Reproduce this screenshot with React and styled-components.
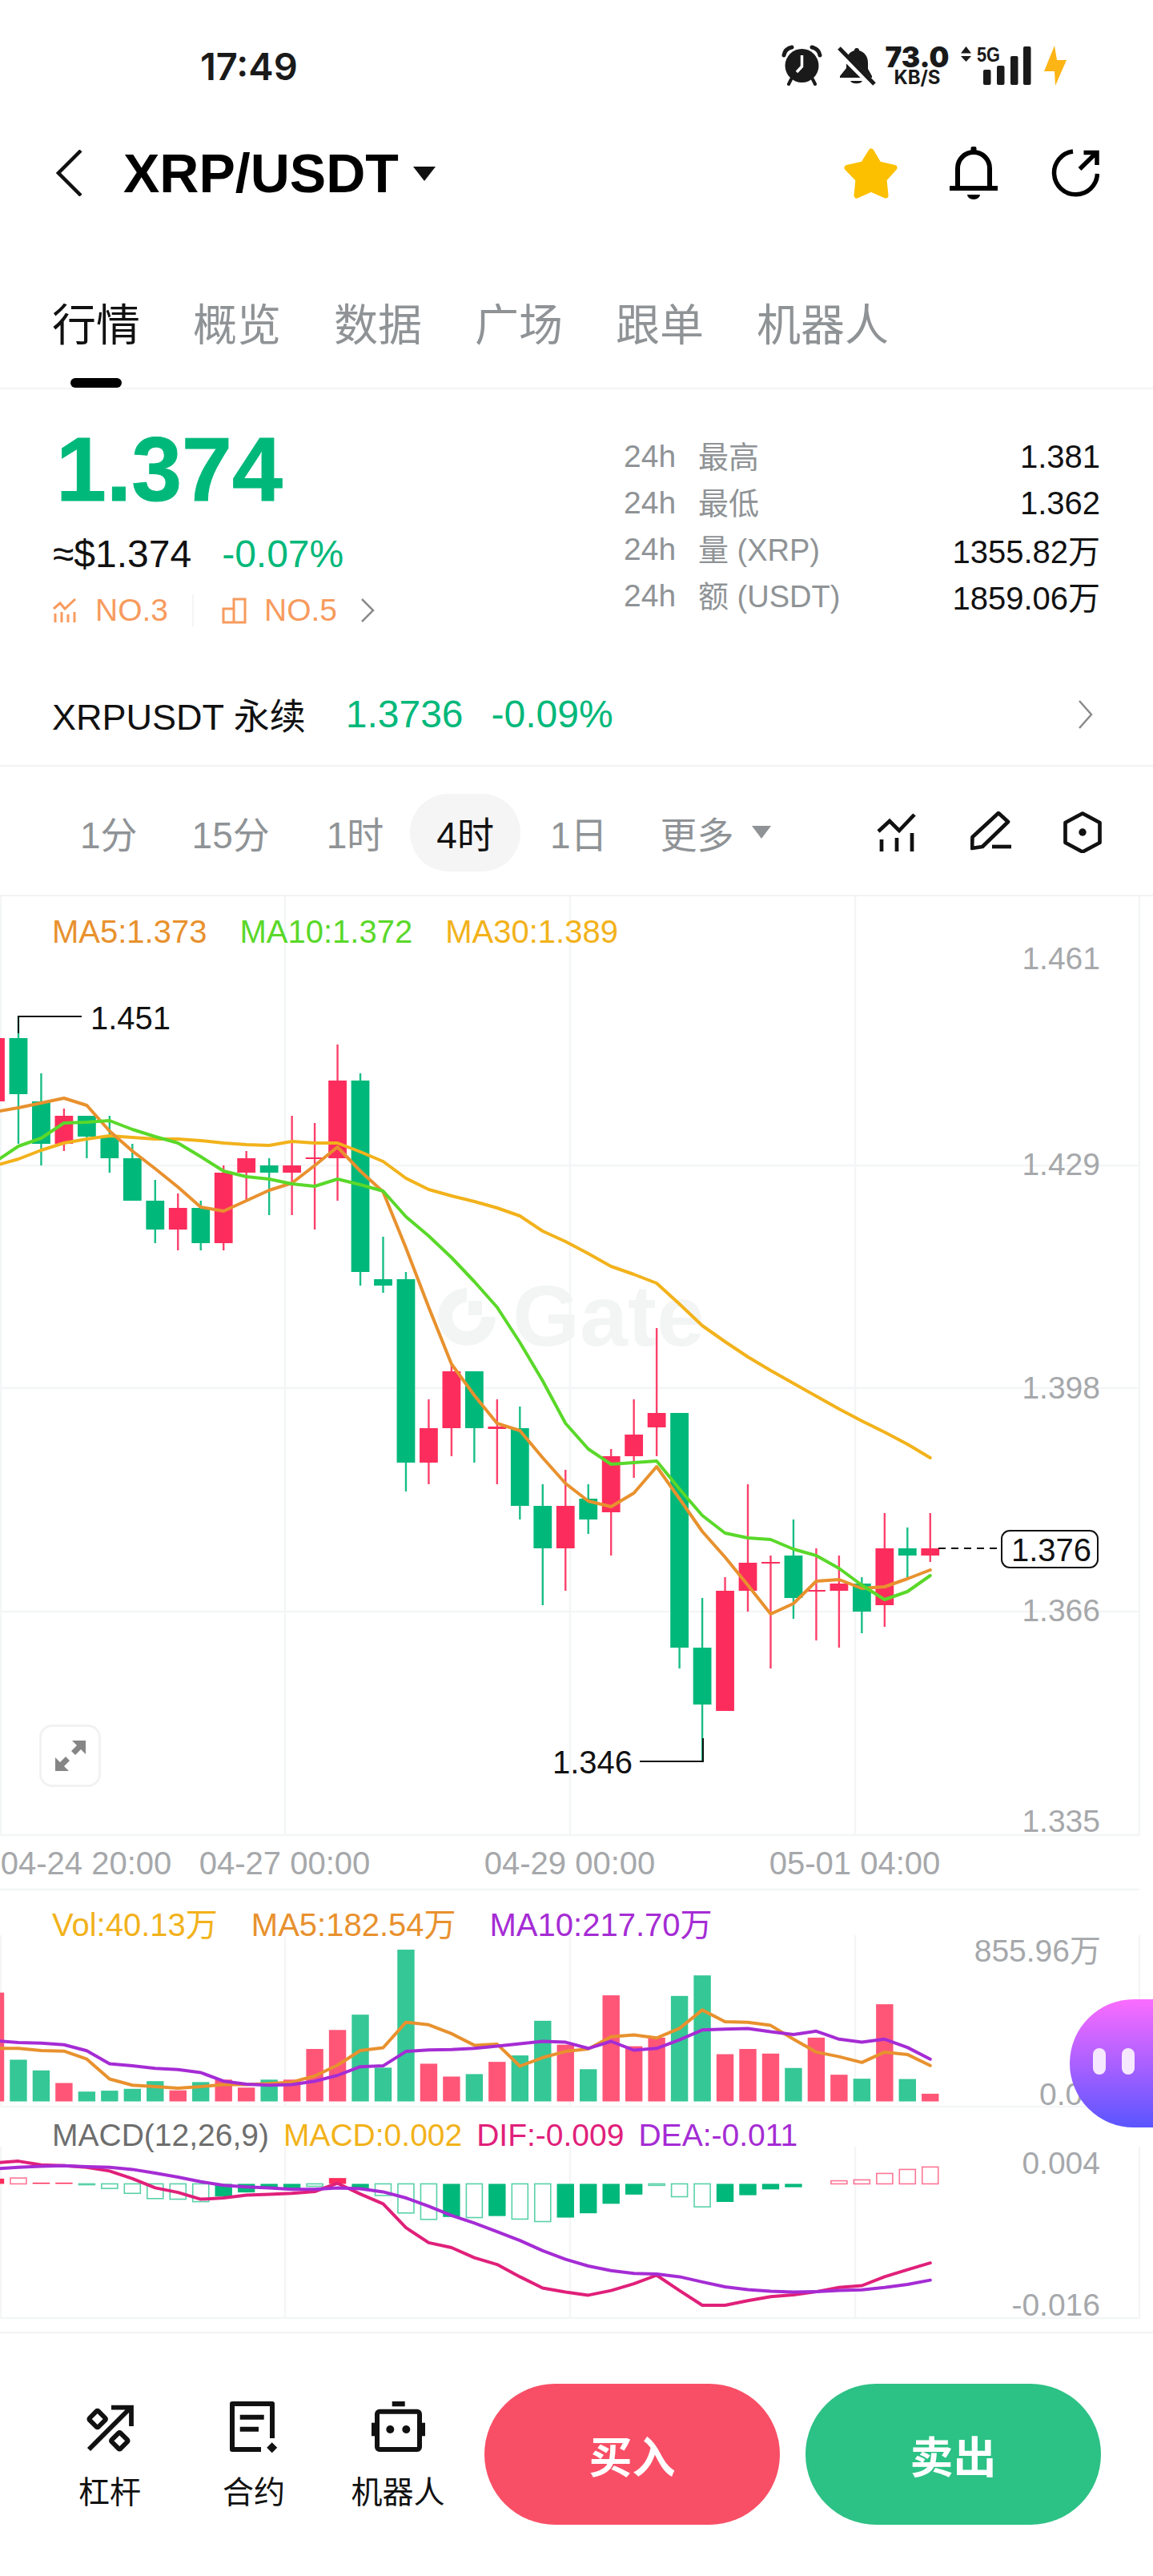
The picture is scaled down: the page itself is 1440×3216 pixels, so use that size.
import styled, { createGlobalStyle } from "styled-components";

const GlobalStyle = createGlobalStyle`
  html, body {
    margin: 0;
    padding: 0;
    background: #fff;
    font-family: "Liberation Sans", "Noto Sans CJK SC", sans-serif;
    color: #111;
  }
`;

const GREEN = "#00b87a";
const RED = "#fc2d5c";
const ORANGE = "#e8912e";
const LIME = "#5ad82a";
const YELLOW = "#f2b21b";
const PURPLE = "#a52cd4";
const PINK = "#e0207a";
const GRID = "#f4f5f6";
const GREY = "#8f9396";
const AXIS = "#a6a8ab";
const INK = "#1a1a1a";

// x of the candle with index i, on all three panels
const cx = (i) => -5.5 + 28.47 * i;
// sub panels were measured from a crop, this maps them back to page y
const py = (v) => 2320 + v / 2.613;
const toPoints = (ys) => ys.map((y, i) => `${cx(i).toFixed(1)},${y.toFixed(1)}`).join(" ");

// [colour, high, body top, body bottom, low]
const candles = [
  ["r", 1270, 1296, 1375, 1400], ["g", 1269, 1296, 1366, 1428], ["g", 1340, 1375, 1428, 1455], ["r", 1384, 1393, 1428, 1437],
  ["g", 1393, 1393, 1419, 1446], ["g", 1393, 1419, 1446, 1464], ["g", 1428, 1446, 1499, 1499], ["g", 1473, 1499, 1535, 1552],
  ["r", 1490, 1508, 1535, 1561], ["g", 1499, 1508, 1552, 1561], ["r", 1455, 1464, 1552, 1561], ["r", 1437, 1446, 1464, 1499],
  ["g", 1446, 1455, 1464, 1517], ["r", 1393, 1455, 1464, 1517], ["r", 1402, 1445, 1447, 1535], ["r", 1304, 1349, 1446, 1499],
  ["g", 1340, 1349, 1588, 1605], ["g", 1544, 1597, 1605, 1614], ["g", 1588, 1597, 1826, 1862], ["r", 1747, 1783, 1826, 1853],
  ["r", 1703, 1712, 1783, 1818], ["g", 1712, 1712, 1783, 1826], ["r", 1747, 1781, 1784, 1853], ["g", 1756, 1783, 1880, 1897],
  ["g", 1853, 1880, 1933, 2004], ["r", 1835, 1880, 1933, 1986], ["g", 1853, 1871, 1897, 1915], ["r", 1809, 1818, 1888, 1942],
  ["r", 1747, 1791, 1818, 1845], ["r", 1658, 1764, 1782, 1818], ["g", 1764, 1764, 2057, 2083], ["g", 1995, 2057, 2128, 2199],
  ["r", 1969, 1986, 2136, 2136], ["r", 1853, 1951, 1986, 2012], ["r", 1942, 1950, 1952, 2083], ["g", 1897, 1942, 1995, 2021],
  ["r", 1933, 1985, 1987, 2048], ["r", 1942, 1977, 1986, 2057], ["g", 1969, 1977, 2012, 2039], ["r", 1889, 1933, 2004, 2031],
  ["g", 1907, 1933, 1942, 1969], ["r", 1889, 1933, 1942, 1950],
];

const ma5 = [1388, 1383, 1377, 1371, 1380, 1412, 1437, 1459, 1482, 1507, 1512, 1499, 1486, 1477, 1455, 1432, 1462, 1488, 1558, 1632, 1703, 1742, 1777, 1786, 1820, 1852, 1874, 1881, 1864, 1831, 1871, 1912, 1944, 1979, 2015, 2002, 1974, 1972, 1983, 1981, 1971, 1960];
const ma10 = [1450, 1431, 1421, 1402, 1401, 1399, 1410, 1419, 1427, 1444, 1462, 1469, 1472, 1478, 1481, 1472, 1479, 1487, 1519, 1543, 1570, 1600, 1632, 1676, 1724, 1777, 1809, 1828, 1826, 1824, 1859, 1892, 1914, 1920, 1922, 1934, 1942, 1958, 1979, 1997, 1987, 1967];
const ma30 = [1455, 1447, 1436, 1427, 1422, 1418, 1420, 1422, 1422, 1424, 1427, 1429, 1430, 1425, 1427, 1427, 1438, 1450, 1471, 1485, 1493, 1500, 1508, 1518, 1537, 1550, 1565, 1581, 1591, 1602, 1628, 1655, 1675, 1694, 1711, 1727, 1743, 1759, 1774, 1788, 1803, 1820];

const volTops = [438, 657, 692, 733, 761, 758, 752, 727, 757, 730, 722, 748, 722, 722, 622, 560, 510, 683, 298, 670, 712, 704, 664, 643, 530, 608, 688, 447, 613, 585, 449, 382, 639, 622, 637, 684, 585, 706, 719, 476, 720, 768];
const volMa5 = [620, 620, 627, 629, 655, 720, 740, 745, 750, 745, 738, 738, 735, 730, 710, 675, 627, 618, 535, 543, 572, 610, 606, 678, 650, 630, 622, 582, 576, 586, 555, 495, 533, 535, 545, 590, 632, 647, 666, 632, 640, 676];
const volMa10 = [595, 601, 603, 608, 628, 670, 677, 685, 689, 699, 727, 737, 740, 738, 727, 708, 680, 677, 630, 625, 624, 620, 613, 605, 597, 600, 620, 597, 626, 620, 592, 560, 557, 555, 566, 575, 564, 590, 600, 590, 617, 655];

// [kind, edge] kind: s solid, h hollow. edge is the far end from the zero line
const macdBars = [
  ["s", 1045], ["h", 1043], ["s", 1058], ["s", 1058], ["h", 1065], ["h", 1077], ["h", 1093], ["h", 1110], ["h", 1112], ["h", 1120],
  ["s", 1103], ["s", 1090], ["s", 1078], ["s", 1078], ["h", 1070], ["s", 1043], ["s", 1078], ["h", 1100], ["h", 1157], ["h", 1178],
  ["s", 1170], ["h", 1172], ["s", 1167], ["h", 1177], ["h", 1185], ["s", 1172], ["s", 1158], ["s", 1127], ["s", 1097], ["h", 1067],
  ["h", 1104], ["h", 1137], ["s", 1121], ["s", 1099], ["s", 1080], ["s", 1073], null, ["h", 1052], ["h", 1049], ["h", 1028], ["h", 1015], ["h", 1007],
];
const dif = [993, 988, 1000, 1003, 1008, 1020, 1045, 1075, 1090, 1112, 1108, 1099, 1096, 1093, 1087, 1060, 1095, 1127, 1205, 1254, 1270, 1303, 1325, 1365, 1402, 1415, 1425, 1410, 1388, 1360, 1410, 1458, 1458, 1443, 1430, 1424, 1414, 1400, 1394, 1365, 1342, 1320];
const dea = [1013, 1008, 1005, 1003, 1006, 1008, 1015, 1027, 1040, 1055, 1067, 1072, 1075, 1080, 1080, 1075, 1078, 1088, 1108, 1135, 1165, 1190, 1218, 1247, 1280, 1308, 1330, 1345, 1354, 1356, 1365, 1382, 1398, 1407, 1412, 1415, 1414, 1410, 1408, 1400, 1390, 1376];

const gridX = [1, 356, 712, 1068, 1423];

const Page = styled.div`
  position: relative;
  width: 1440px;
  height: 3216px;
  overflow: hidden;
  background: #fff;
  display: flex;
  flex-direction: column;
`;

/* status bar */
const StatusBar = styled.div`
  height: 164px;
  flex: none;
  box-sizing: border-box;
  padding: 0 108px 0 250px;
  display: flex;
  align-items: center;
  justify-content: space-between;
`;
const Clock = styled.span`
  font-family: Inter, "Liberation Sans", sans-serif;
  font-size: 47px;
  font-weight: 600;
  color: ${INK};
`;
const StatusIcons = styled.div`
  display: flex;
  align-items: center;
  color: ${INK};
`;
const Speed = styled.div`
  width: 75px;
  margin: 0 17px 0 15px;
  display: flex;
  flex-direction: column;
  align-items: center;
  font-family: Inter, "Liberation Sans", sans-serif;
  font-weight: 700;
  & > b {
    font-size: 35px;
    line-height: 29px;
  }
  & > small {
    font-size: 24px;
    line-height: 21px;
    font-weight: 700;
  }
`;
const StatusSvg = styled.svg`
  flex: none;
  display: block;
  overflow: visible;
  margin-left: ${({ $ml }) => $ml || 0}px;
`;
const SmallNet = styled.text`
  font-size: 26px;
  font-weight: 700;
  fill: ${INK};
`;

/* nav */
const NavBar = styled.div`
  height: 104px;
  flex: none;
  box-sizing: border-box;
  padding: 0 67px 0 70px;
  display: flex;
  align-items: center;
`;
const Title = styled.h1`
  margin: 0 0 0 51px;
  font-size: 68px;
  line-height: 80px;
  font-weight: 700;
  color: #000;
`;
const TitleCaret = styled.i`
  width: 0;
  height: 0;
  margin: 2px 0 0 18px;
  border-left: 14px solid transparent;
  border-right: 14px solid transparent;
  border-top: 18px solid #111;
`;
const NavActions = styled.div`
  margin-left: auto;
  display: flex;
  align-items: center;
  gap: 64px;
`;

/* tabs */
const Tabs = styled.div`
  height: 218px;
  flex: none;
  box-sizing: border-box;
  padding: 110px 0 0 65px;
  display: flex;
  gap: 66px;
  align-items: flex-start;
  border-bottom: 2px solid #f3f3f3;
`;
const Tab = styled.span`
  position: relative;
  font-size: 55px;
  line-height: 56px;
  color: ${({ $active }) => ($active ? "#111" : GREY)};
  &::after {
    content: "";
    display: ${({ $active }) => ($active ? "block" : "none")};
    position: absolute;
    left: 23px;
    top: 94px;
    width: 64px;
    height: 12px;
    border-radius: 6px;
    background: #000;
  }
`;

/* quote */
const Quote = styled.div`
  height: 342px;
  flex: none;
  box-sizing: border-box;
  padding: 0 66px;
  display: flex;
  justify-content: space-between;
`;
const QuoteLeft = styled.div`
  padding-top: 52px;
  display: flex;
  flex-direction: column;
`;
const BigPrice = styled.div`
  margin-left: 4px;
  font-size: 113px;
  line-height: 96px;
  font-weight: 700;
  color: ${GREEN};
  -webkit-text-stroke: 1px ${GREEN};
`;
const UsdRow = styled.div`
  margin-top: 33px;
  display: flex;
  gap: 38px;
  font-size: 48px;
  line-height: 50px;
`;
const Change = styled.span`
  color: ${GREEN};
`;
const RankRow = styled.div`
  margin-top: 25px;
  height: 40px;
  display: flex;
  align-items: center;
  color: #f79b5e;
  font-size: 39px;
`;
const RankText = styled.span`
  margin-left: ${({ $ml }) => $ml}px;
`;
const RankDivider = styled.i`
  width: 2px;
  height: 40px;
  margin: 0 35px 0 30px;
  background: #f5f5f5;
`;
const Chevron = styled.svg`
  flex: none;
  display: block;
  margin-left: ${({ $ml }) => ($ml ? `${$ml}px` : "auto")};
`;
const Stats = styled.div`
  width: 595px;
  padding-top: 55px;
  display: flex;
  flex-direction: column;
`;
const StatRow = styled.div`
  height: 58px;
  display: flex;
  align-items: center;
  font-size: 39px;
`;
const StatPeriod = styled.span`
  width: 93px;
  color: ${GREY};
`;
const StatName = styled.span`
  margin-top: -5px;
  color: ${GREY};
  font-size: 38px;
`;
const StatValue = styled.span`
  margin-left: auto;
  font-size: 40px;
  color: #111;
`;

/* perp row */
const PerpRow = styled.div`
  height: 129px;
  flex: none;
  box-sizing: border-box;
  padding: 0 75px 0 65px;
  display: flex;
  align-items: center;
  border-bottom: 2px solid #f3f3f3;
`;
const PerpName = styled.span`
  font-size: 45px;
  margin-right: 50px;
`;
const PerpNumber = styled.span`
  font-size: 48px;
  color: ${GREEN};
  margin-right: 35px;
`;

/* period row */
const PeriodRow = styled.div`
  height: 162px;
  flex: none;
  box-sizing: border-box;
  padding: 4px 64px 0 66px;
  display: flex;
  align-items: center;
  border-bottom: 2px solid #f3f3f3;
`;
const Period = styled.span`
  box-sizing: border-box;
  height: 97px;
  padding: 0 ${({ $active }) => ($active ? 33 : 0)}px;
  margin-left: ${({ $ml }) => $ml}px;
  display: flex;
  align-items: center;
  justify-content: center;
  font-size: 46px;
  border-radius: 48px;
  color: ${({ $active }) => ($active ? "#111" : GREY)};
  background: ${({ $active }) => ($active ? "#f5f5f5" : "transparent")};
`;
const MoreCaret = styled.i`
  width: 0;
  height: 0;
  margin: 0 0 0 22px;
  border-left: 12px solid transparent;
  border-right: 12px solid transparent;
  border-top: 16px solid ${GREY};
`;
const PeriodTools = styled.div`
  margin-left: auto;
  display: flex;
  align-items: center;
  gap: 63px;
  & > svg:first-child {
    margin-right: 4px;
  }
`;

/* chart panels */
const ChartPanel = styled.div`
  position: relative;
  flex: none;
  box-sizing: border-box;
  height: ${({ $height }) => $height}px;
  padding: ${({ $top }) => $top}px 0 0 65px;
`;
const ChartSvg = styled.svg`
  position: absolute;
  left: 0;
  top: 0;
  display: block;
  overflow: visible;
`;
const Legend = styled.div`
  position: relative;
  display: flex;
  gap: ${({ $gap }) => $gap}px;
  font-size: ${({ $size }) => $size || 40}px;
  line-height: 42px;
  white-space: nowrap;
`;
const LegendItem = styled.span`
  color: ${({ $color }) => $color};
`;
const AxisText = styled.text`
  font-size: 39px;
  fill: ${AXIS};
  text-anchor: end;
  dominant-baseline: central;
`;
const MarkText = styled.text`
  font-size: 40px;
  fill: #111;
  dominant-baseline: central;
`;
const Watermark = styled.text`
  font-size: 108px;
  font-weight: 700;
  fill: #f3f5f5;
`;
const ExpandButton = styled.div`
  position: absolute;
  left: 49px;
  top: 1034px;
  width: 77px;
  height: 78px;
  box-sizing: border-box;
  border: 3px solid #f2f2f2;
  border-radius: 16px;
  display: flex;
  align-items: center;
  justify-content: center;
  background: #fff;
`;
const XAxis = styled.div`
  height: 67px;
  flex: none;
  box-sizing: border-box;
  padding-top: 14px;
  display: flex;
  gap: 141px;
  & > span:first-child {
    margin-right: -108px;
  }
`;
const XLabel = styled.span`
  width: 215px;
  flex: none;
  text-align: center;
  white-space: nowrap;
  font-size: 40px;
  line-height: 42px;
  color: ${AXIS};
`;

/* floating assistant */
const Bubble = styled.div`
  position: absolute;
  right: 0;
  top: 2496px;
  width: 104px;
  height: 160px;
  box-sizing: border-box;
  padding: 0 0 6px 29px;
  display: flex;
  align-items: center;
  gap: 20px;
  border-radius: 80px 0 0 80px;
  background: linear-gradient(180deg, #fb6cff 0%, #5a55ff 100%);
`;
const Eye = styled.i`
  width: 16px;
  height: 33px;
  border-radius: 8px;
  background: #f6e8ff;
`;

/* footer */
const Footer = styled.div`
  margin-top: 16px;
  flex: 1;
  box-sizing: border-box;
  padding: 63px 65px 0 47px;
  display: flex;
  align-items: flex-start;
  border-top: 2px solid #f2f2f2;
`;
const Tools = styled.div`
  width: 540px;
  margin: 22px 18px 0 0;
  display: grid;
  grid-template-columns: repeat(3, 180px);
`;
const Tool = styled.div`
  display: flex;
  flex-direction: column;
  align-items: center;
  font-size: 39px;
  line-height: 39px;
  color: #111;
  & > svg {
    display: block;
    margin-bottom: 30px;
  }
`;
const TradeButton = styled.button`
  width: 369px;
  height: 176px;
  flex: none;
  margin-left: ${({ $ml }) => $ml || 0}px;
  padding: 0;
  border: 0;
  border-radius: 88px;
  font-family: inherit;
  font-size: 54px;
  font-weight: 700;
  color: #fff;
  background: ${({ $buy }) => ($buy ? "#f94f66" : "#2cc185")};
`;

const Grid = ({ top, bottom, hLines = [] }) => (
  <g stroke={GRID} strokeWidth="2.5">
    {gridX.map((x) => (
      <line key={x} x1={x} x2={x} y1={top} y2={bottom} />
    ))}
    {hLines.map((y) => (
      <line key={y} x1="0" x2="1423" y1={y} y2={y} />
    ))}
  </g>
);

const Line = ({ ys, color, width = 4 }) => (
  <polyline points={toPoints(ys)} fill="none" stroke={color} strokeWidth={width} strokeLinejoin="round" strokeLinecap="round" />
);

const MainChart = () => (
  <ChartPanel $height={1172} $top={23}>
    <ChartSvg width="1440" height="1172" viewBox="0 1119 1440 1172">
      <Grid top={1119} bottom={2291} hLines={[1455, 1733, 2012, 2291]} />
      <g fill="#f3f5f5">
        <path d="M583 1608a36 36 0 1 0 36 36h-18a18 18 0 1 1-18-18z" />
        <rect x="585" y="1624" width="17" height="18" />
      </g>
      <Watermark x="640" y="1680">Gate</Watermark>
      {candles.map(([c, high, top, bottom, low], i) => {
        const color = c === "g" ? GREEN : RED;
        const x = cx(i);
        return (
          <g key={i}>
            <line x1={x} x2={x} y1={high} y2={low} stroke={color} strokeWidth="2.4" opacity="0.9" />
            <rect x={x - 11.4} y={top} width="22.8" height={bottom - top} fill={color} />
          </g>
        );
      })}
      <Line ys={ma30} color={YELLOW} />
      <Line ys={ma5} color={ORANGE} />
      <Line ys={ma10} color={LIME} />
      <polyline points="23,1290 23,1269 102,1269" fill="none" stroke="#111" strokeWidth="2" />
      <MarkText x="113" y="1271">1.451</MarkText>
      <polyline points="878,2170 878,2199 799,2199" fill="none" stroke="#111" strokeWidth="2" />
      <MarkText x="690" y="2200">1.346</MarkText>
      <line x1="1172" x2="1245" y1="1933" y2="1933" stroke="#111" strokeWidth="2" strokeDasharray="9 7" />
      <rect x="1251" y="1911" width="120" height="46" rx="10" fill="#fff" stroke="#111" strokeWidth="2" />
      <MarkText x="1263" y="1935">1.376</MarkText>
      <AxisText x="1374" y="1196">1.461</AxisText>
      <AxisText x="1374" y="1453">1.429</AxisText>
      <AxisText x="1374" y="1732">1.398</AxisText>
      <AxisText x="1374" y="2010">1.366</AxisText>
      <AxisText x="1374" y="2273">1.335</AxisText>
    </ChartSvg>
    <Legend $gap={41}>
      <LegendItem $color={ORANGE}>MA5:1.373</LegendItem>
      <LegendItem $color={LIME}>MA10:1.372</LegendItem>
      <LegendItem $color={YELLOW}>MA30:1.389</LegendItem>
    </Legend>
    <ExpandButton>
      <svg width="38" height="38" viewBox="0 0 38 38" fill="#868686">
        <path d="M21 0h17v17l-6-6-7 7-5-5 7-7z" />
        <path d="M17 38H0V21l6 6 7-7 5 5-7 7z" />
      </svg>
    </ExpandButton>
  </ChartPanel>
);

const VolumeChart = () => (
  <ChartPanel $height={273} $top={24}>
    <ChartSvg width="1440" height="273" viewBox="0 2358 1440 273">
      <Grid top={2416} bottom={2631} hLines={[2359, 2630]} />
      {volTops.map((top, i) => {
        const y = py(top);
        return (
          <rect key={i} x={cx(i) - 10.7} y={y} width="21.4" height={2623.5 - y} fill={candles[i][0] === "g" ? "#35c796" : "#ff5678"} />
        );
      })}
      <Line ys={volMa5.map(py)} color={ORANGE} />
      <Line ys={volMa10.map(py)} color={PURPLE} />
      <AxisText x="1375" y="2435">855.96万</AxisText>
      <AxisText x="1374" y="2614">0.00</AxisText>
    </ChartSvg>
    <Legend $gap={42}>
      <LegendItem $color={YELLOW}>Vol:40.13万</LegendItem>
      <LegendItem $color={ORANGE}>MA5:182.54万</LegendItem>
      <LegendItem $color={PURPLE}>MA10:217.70万</LegendItem>
    </Legend>
  </ChartPanel>
);

const MacdChart = () => (
  <ChartPanel $height={264} $top={14}>
    <ChartSvg width="1440" height="264" viewBox="0 2631 1440 264">
      <Grid top={2680} bottom={2895} hLines={[2894]} />
      {macdBars.map((bar, i) => {
        if (!bar) return null;
        const [kind, edge] = bar;
        const zero = py(1062);
        const y = py(edge);
        const up = y < zero;
        const color = up ? RED : GREEN;
        const top = Math.min(y, zero);
        const h = Math.abs(y - zero);
        return kind === "s" ? (
          <rect key={i} x={cx(i) - 10.7} y={top} width="21.4" height={Math.max(h, 1.5)} fill={color} />
        ) : (
          <rect key={i} x={cx(i) - 10} y={top} width="20" height={h} fill="none" stroke={color} strokeOpacity="0.65" strokeWidth="1.6" />
        );
      })}
      <Line ys={dif.map(py)} color={PINK} />
      <Line ys={dea.map(py)} color={PURPLE} />
      <AxisText x="1374" y="2700">0.004</AxisText>
      <AxisText x="1374" y="2877">-0.016</AxisText>
    </ChartSvg>
    <Legend $gap={18} $size={39}>
      <LegendItem $color="#6e6e6e">MACD(12,26,9)</LegendItem>
      <LegendItem $color={YELLOW}>MACD:0.002</LegendItem>
      <LegendItem $color={PINK}>DIF:-0.009</LegendItem>
      <LegendItem $color={PURPLE}>DEA:-0.011</LegendItem>
    </Legend>
  </ChartPanel>
);

const periods = [
  { label: "1分", ml: 34 },
  { label: "15分", ml: 68 },
  { label: "1时", ml: 71 },
  { label: "4时", ml: 33, active: true },
  { label: "1日", ml: 37 },
  { label: "更多", ml: 66 },
];

const stats = [
  ["最高", "1.381"],
  ["最低", "1.362"],
  ["量 (XRP)", "1355.82万"],
  ["额 (USDT)", "1859.06万"],
];

export default function App() {
  return (
    <Page>
      <GlobalStyle />
      <StatusBar>
        <Clock>17:49</Clock>
        <StatusIcons>
          <StatusSvg width="49" height="50" viewBox="0 0 49 50">
            <circle cx="24.500" cy="25" r="21" fill={INK} />
            <path d="M24.500 12v14l-6.500 7" fill="none" stroke="#fff" strokeWidth="3.500" />
            <path d="M2 12C3 6 7 3 12 2M47 12C46 6 42 3 37 2" fill="none" stroke={INK} strokeWidth="5" strokeLinecap="round" />
            <path d="M11 42l-3 6M38 42l3 6" fill="none" stroke={INK} strokeWidth="4" strokeLinecap="round" />
          </StatusSvg>
          <StatusSvg $ml={21} width="46" height="47" viewBox="0 0 46 47">
            <path d="M23 1c-2 0-3 1-3 3-7 2-10 8-10 15v7L2 36v2h40v-2l-5-9v-8c0-7-4-13-11-15 0-2-1-3-3-3z" fill={INK} />
            <path d="M15 42h15a8 5 0 0 1-15 0z" fill={INK} />
            <path d="M-2 2l44 44" stroke="#fff" strokeWidth="9" />
            <path d="M1 1l44 45" stroke={INK} strokeWidth="5" />
          </StatusSvg>
          <Speed>
            <b>73.0</b>
            <small>KB/S</small>
          </Speed>
          <StatusSvg width="87" height="48" viewBox="0 0 87 48">
            <path d="M6.500 0L13 8.500H0zM6.500 19L0 12h13z" fill={INK} />
            <SmallNet x="20" y="19" textLength="29" lengthAdjust="spacingAndGlyphs">5G</SmallNet>
            <rect x="28" y="29" width="9.500" height="19" rx="2" fill={INK} />
            <rect x="45" y="24" width="9.500" height="24" rx="2" fill={INK} />
            <rect x="62" y="12" width="9.500" height="36" rx="2" fill={INK} />
            <rect x="78" y="0" width="9.500" height="48" rx="2" fill={INK} />
          </StatusSvg>
          <StatusSvg $ml={17} width="28" height="50" viewBox="0 0 28 50">
            <path d="M13 0L0 32h13l1 18L28 18H16z" fill="#fdb515" />
          </StatusSvg>
        </StatusIcons>
      </StatusBar>

      <NavBar>
        <svg width="33" height="58" viewBox="0 0 33 58" fill="none" stroke="#111" strokeWidth="4.500">
          <path d="M31 1L3 29l28 28" />
        </svg>
        <Title>XRP/USDT</Title>
        <TitleCaret />
        <NavActions>
          <svg width="68" height="63" viewBox="0 0 68 63" fill="#fcc000" stroke="#fcc000" strokeWidth="7" strokeLinejoin="round">
            <path d="M34 4l9.500 16L63 24.500 50 39l2 20-18-8-18 8 2-20L4 24.500 24 20z" />
          </svg>
          <svg width="60" height="66" viewBox="0 0 60 66" fill="none" stroke="#000" strokeWidth="6">
            <rect x="26.500" y="0" width="7" height="6" rx="2" fill="#000" stroke="none" />
            <path d="M10 51V27a20 20 0 0 1 40 0v24" />
            <path d="M0 52h60" />
            <path d="M22 60h16a8 6 0 0 1-16 0z" fill="#000" stroke="none" />
          </svg>
          <svg width="63" height="60" viewBox="-5 0 63 60" fill="none" stroke="#000" strokeWidth="5.500">
            <path d="M25 3A27 27 0 1 0 55.500 31" />
            <path d="M33.500 25L54 5M38.500 4.500H55V20" />
          </svg>
        </NavActions>
      </NavBar>

      <Tabs>
        <Tab $active>行情</Tab>
        <Tab>概览</Tab>
        <Tab>数据</Tab>
        <Tab>广场</Tab>
        <Tab>跟单</Tab>
        <Tab>机器人</Tab>
      </Tabs>

      <Quote>
        <QuoteLeft>
          <BigPrice>1.374</BigPrice>
          <UsdRow>
            <span>≈$1.374</span>
            <Change>-0.07%</Change>
          </UsdRow>
          <RankRow>
            <svg width="30" height="30" viewBox="0 0 30 30" fill="none" stroke="#f79b5e" strokeWidth="3">
              <path d="M1 13l8-7 6 7L28 1" />
              <path d="M3 19v11M11 17v13M19 20v10M27 17v13" />
            </svg>
            <RankText $ml={23}>NO.3</RankText>
            <RankDivider />
            <svg width="31" height="33" viewBox="0 0 31 33" fill="none" stroke="#f79b5e" strokeWidth="3">
              <path d="M2 14h13v17H2zM15 2h14v29H15z" />
            </svg>
            <RankText $ml={22}>NO.5</RankText>
            <Chevron $ml={29} width="18" height="30" viewBox="0 0 18 30" fill="none" stroke="#8a8a8a" strokeWidth="2.500">
              <path d="M2 1l14 14L2 29" />
            </Chevron>
          </RankRow>
        </QuoteLeft>
        <Stats>
          {stats.map(([name, value]) => (
            <StatRow key={name}>
              <StatPeriod>24h</StatPeriod>
              <StatName>{name}</StatName>
              <StatValue>{value}</StatValue>
            </StatRow>
          ))}
        </Stats>
      </Quote>

      <PerpRow>
        <PerpName>XRPUSDT 永续</PerpName>
        <PerpNumber>1.3736</PerpNumber>
        <PerpNumber>-0.09%</PerpNumber>
        <Chevron width="19" height="36" viewBox="0 0 19 36" fill="none" stroke="#8a8a8a" strokeWidth="2.500">
          <path d="M2 1l15 17L2 35" />
        </Chevron>
      </PerpRow>

      <PeriodRow>
        {periods.map((p) => (
          <Period key={p.label} $ml={p.ml} $active={p.active}>
            {p.label}
          </Period>
        ))}
        <MoreCaret />
        <PeriodTools>
          <svg width="50" height="52" viewBox="0 0 50 52" fill="none" stroke="#111" strokeWidth="4.700">
            <path d="M2 25l14-13 12 12L47 4" />
            <path d="M6 35v15M25 33v17M44 27v23" />
          </svg>
          <svg width="53" height="52" viewBox="0 0 53 52" fill="none" stroke="#111" strokeWidth="4.700" strokeLinejoin="round">
            <path d="M2.500 32L35 2l12 11-32 31-13 2z" />
            <path d="M27 44h24" />
          </svg>
          <svg width="48" height="52" viewBox="0 0 48 52" fill="none" stroke="#111" strokeWidth="4.700" strokeLinejoin="round">
            <path d="M24 2.500L45.500 14v25L24 50.500 2.500 39V14z" />
            <circle cx="24" cy="26" r="4.700" fill="#111" stroke="none" />
          </svg>
        </PeriodTools>
      </PeriodRow>

      <MainChart />
      <XAxis>
        <XLabel>04-24 20:00</XLabel>
        <XLabel>04-27 00:00</XLabel>
        <XLabel>04-29 00:00</XLabel>
        <XLabel>05-01 04:00</XLabel>
      </XAxis>
      <VolumeChart />
      <MacdChart />

      <Bubble>
        <Eye />
        <Eye />
      </Bubble>

      <Footer>
        <Tools>
          <Tool>
            <svg width="60" height="64" viewBox="0 0 60 64" fill="none" stroke="#111" strokeWidth="5.800">
              <rect x="7" y="14.300" width="15.500" height="15.500" rx="1.500" transform="rotate(45 14.700 22)" />
              <rect x="34.500" y="41.500" width="15.500" height="15.500" rx="1.500" transform="rotate(45 42.300 49.300)" />
              <path d="M4 60L56 8M32 7.700h25V31" />
            </svg>
            <span>杠杆</span>
          </Tool>
          <Tool>
            <svg width="60" height="64" viewBox="0 0 60 64" fill="none" stroke="#111" strokeWidth="6">
              <path d="M39 60H3V3h50v43" strokeLinejoin="round" />
              <path d="M12.700 19.700h30M12.700 34.700H36" />
              <path d="M52.700 51.300l6.500 6.500-6.500 6.500-6.500-6.500z" fill="#111" stroke="none" />
            </svg>
            <span>合约</span>
          </Tool>
          <Tool>
            <svg width="67" height="64" viewBox="0 0 67 64" fill="none" stroke="#111" strokeWidth="6">
              <rect x="25.700" y="0" width="16" height="6.300" fill="#111" stroke="none" />
              <rect x="7" y="12.700" width="53" height="47.300" rx="3" />
              <rect x="0" y="26.700" width="4.500" height="16.600" fill="#111" stroke="none" />
              <rect x="62.500" y="26.700" width="4.500" height="16.600" fill="#111" stroke="none" />
              <circle cx="23.300" cy="35" r="5" fill="#111" stroke="none" />
              <circle cx="43.300" cy="35" r="5" fill="#111" stroke="none" />
            </svg>
            <span>机器人</span>
          </Tool>
        </Tools>
        <TradeButton $buy>买入</TradeButton>
        <TradeButton $ml={32}>卖出</TradeButton>
      </Footer>
    </Page>
  );
}
